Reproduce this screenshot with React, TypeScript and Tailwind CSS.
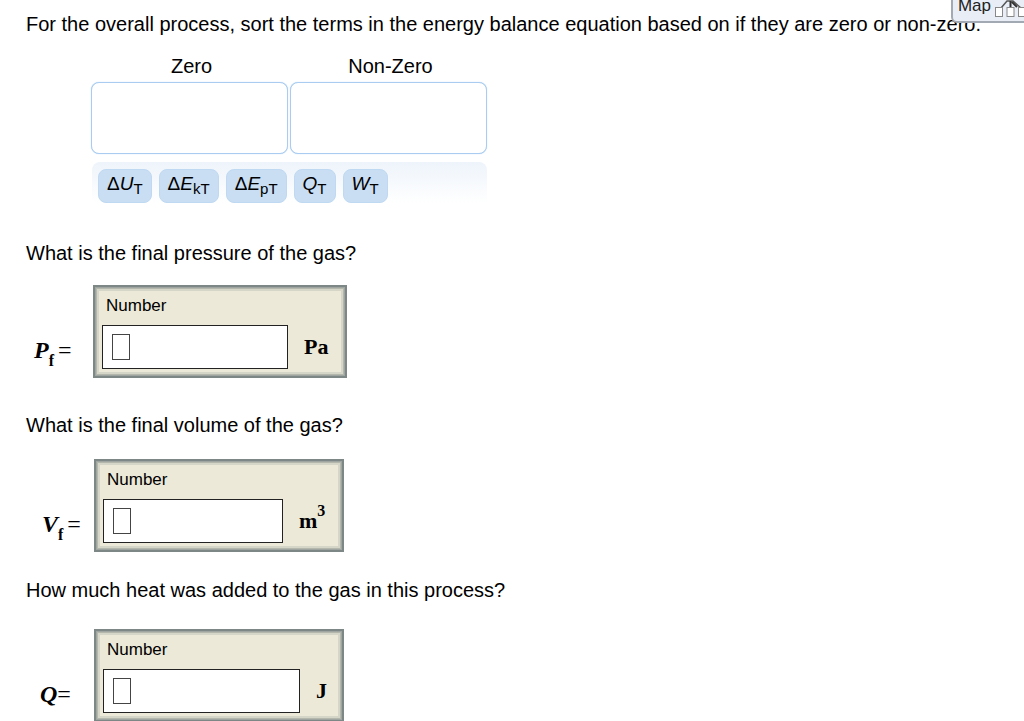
import React, { useState } from "react";

type Term = { id: string; symbol: string; delta?: boolean; sub: string };

type Question = {
  id: string;
  prompt: string;
  symbol: string;
  sub?: string;
  unit: string;
  unitSup?: string;
  sectionClass: string;
  rowClass: string;
  symbolClass: string;
  panelClass: string;
  fieldClass: string;
};

const TERMS: Term[] = [
  { id: "du", symbol: "U", delta: true, sub: "T" },
  { id: "dek", symbol: "E", delta: true, sub: "kT" },
  { id: "dep", symbol: "E", delta: true, sub: "pT" },
  { id: "q", symbol: "Q", sub: "T" },
  { id: "w", symbol: "W", sub: "T" },
];

const BINS = ["Zero", "Non-Zero"];

const QUESTIONS: Question[] = [
  {
    id: "pressure",
    prompt: "What is the final pressure of the gas?",
    symbol: "P",
    sub: "f",
    unit: "Pa",
    sectionClass: "mt-9",
    rowClass: "mt-[18px]",
    symbolClass: "w-[93px] pl-[34px]",
    panelClass: "w-[254px]",
    fieldClass: "w-[186px]",
  },
  {
    id: "volume",
    prompt: "What is the final volume of the gas?",
    symbol: "V",
    sub: "f",
    unit: "m",
    unitSup: "3",
    sectionClass: "mt-[33px]",
    rowClass: "mt-5",
    symbolClass: "w-[94px] pl-[42px]",
    panelClass: "w-[250px]",
    fieldClass: "w-[180px]",
  },
  {
    id: "heat",
    prompt: "How much heat was added to the gas in this process?",
    symbol: "Q",
    unit: "J",
    sectionClass: "mt-6",
    rowClass: "mt-[25px]",
    symbolClass: "w-[94px] pl-10",
    panelClass: "w-[250px]",
    fieldClass: "w-[197px]",
  },
];

function MapButton() {
  return (
    <button
      type="button"
      className="absolute -top-3 -right-3 flex h-[35px] items-center gap-1 rounded-md border-2 border-[#a3a9b3] bg-[#e9eef6] pr-[7px] pl-[5px] text-[17px] text-[#222]"
    >
      Map
      <svg width="32" height="20" viewBox="0 0 32 20" fill="none" className="mt-1">
        <path d="M6 10 L12 3 H18 L26 10" stroke="#555" strokeWidth="1.5" />
        <path d="M15.5 3 V10 M17 4 L22 9" stroke="#333" strokeWidth="2" />
        <rect x="0.5" y="9.5" width="7" height="9" fill="#fff" stroke="#888" />
        <rect x="12" y="9.5" width="7" height="9" fill="#fff" stroke="#888" />
        <rect x="23.5" y="9.5" width="7" height="9" fill="#fff" stroke="#888" />
      </svg>
    </button>
  );
}

function NumberQuestion({ q }: { q: Question }) {
  const [value, setValue] = useState("");

  return (
    <section className={q.sectionClass}>
      <h2 className="pl-[26px] text-xl leading-7">{q.prompt}</h2>
      <div className={`flex items-end ${q.rowClass}`}>
        <div
          className={`flex shrink-0 items-baseline pb-3 font-['Liberation_Serif',serif] text-2xl leading-8 font-bold ${q.symbolClass}`}
        >
          <i>{q.symbol}</i>
          {q.sub && <sub className="-bottom-2 mr-1 text-base">{q.sub}</sub>}
          <span className="font-normal">=</span>
        </div>
        <div
          className={`border-2 border-[#7d8785] bg-[#ece9d8] px-[7px] py-[7px] shadow-[inset_0_0_0_1px_#9fa5a0,inset_0_0_0_2px_#b3b7ac,inset_0_0_0_4px_#d6d6c8] ${q.panelClass}`}
        >
          <label htmlFor={q.id} className="block pl-1 text-[17px] leading-6">
            Number
          </label>
          <div className="mt-[7px] flex items-center">
            <div className={`flex h-11 shrink-0 items-center gap-1 border border-[#222] bg-white pl-[9px] ${q.fieldClass}`}>
              <span className="h-[26px] w-[18px] shrink-0 border border-[#444]" />
              <input
                id={q.id}
                type="text"
                value={value}
                onChange={(e) => setValue(e.target.value)}
                className="h-full min-w-0 flex-1 bg-transparent text-base outline-none"
              />
            </div>
            <span className="pl-4 font-['Liberation_Serif',serif] text-[22px] leading-8 font-bold">
              {q.unit}
              {q.unitSup && <sup className="-top-3 text-base">{q.unitSup}</sup>}
            </span>
          </div>
        </div>
      </div>
    </section>
  );
}

export default function App() {
  return (
    <main className="relative h-screen overflow-hidden bg-white pt-[10px] font-['Liberation_Sans',Arial,sans-serif] text-black">
      <p className="pl-[26px] text-xl leading-7 whitespace-nowrap">
        For the overall process, sort the terms in the energy balance equation based on if they are zero or non-zero.
      </p>
      <MapButton />

      {/* Sorting bins */}
      <div className="mt-[14px] ml-[91px] flex w-[396px] gap-[2px]">
        {BINS.map((bin) => (
          <div key={bin} className="flex-1">
            <h2 className="pl-1 text-center text-xl leading-7">{bin}</h2>
            <div className="mt-0.5 h-[72px] rounded-lg border border-[#a9ccf0] bg-white shadow-[0_0_1px_#a9ccf0]" />
          </div>
        ))}
      </div>

      {/* Terms to drag */}
      <div className="mt-2 ml-[92px] flex w-[395px] gap-[7px] rounded-t-lg bg-linear-to-b from-[#eef4fb] to-white px-[6px] pt-[7px]">
        {TERMS.map((t) => (
          <button
            key={t.id}
            type="button"
            draggable
            className="h-[34px] rounded-lg border border-[#bfd9f2] bg-[#c9def3] px-2 pb-1 text-[19px] leading-7"
          >
            {t.delta && "Δ"}
            <i>{t.symbol}</i>
            <sub className="text-[15px]">{t.sub}</sub>
          </button>
        ))}
      </div>

      {QUESTIONS.map((q) => (
        <NumberQuestion key={q.id} q={q} />
      ))}
    </main>
  );
}
